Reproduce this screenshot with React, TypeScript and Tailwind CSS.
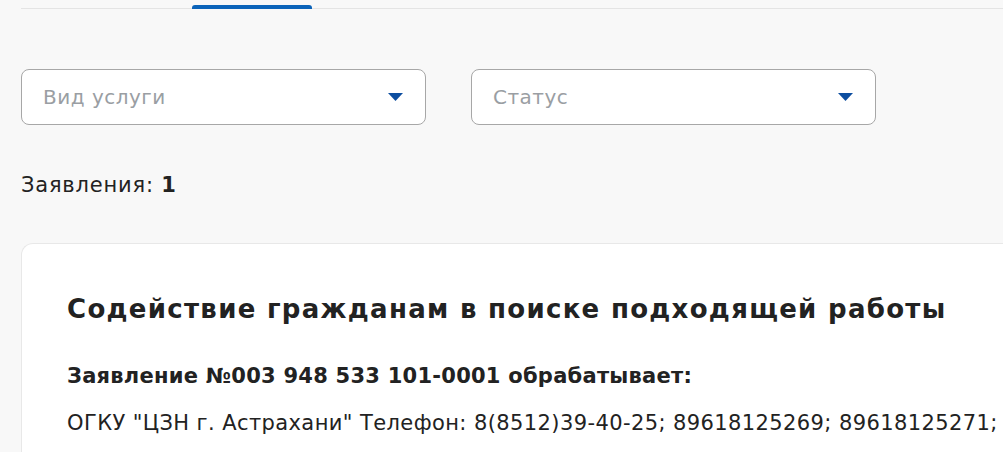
import React from "react";

const FILTERS = ["Вид услуги", "Статус"];

const Caret = () => (
  <svg width="15" height="8" viewBox="0 0 15 8" className="shrink-0">
    <path d="M0 0h15L7.5 8z" fill="#0d4ea0" />
  </svg>
);

export default function App() {
  return (
    <div
      className="flex h-[452px] flex-col overflow-hidden bg-[#f8f8f8] pl-[21px] text-[#222]"
      style={{ fontFamily: "'DejaVu Sans', sans-serif" }}
    >
      {/* tabs line */}
      <div className="flex h-[9px] shrink-0 items-end border-b border-[#e4e4e4]">
        <div className="ml-[171px] h-[4px] w-[120px] translate-y-[1px] rounded-t-[3px] bg-[#0b63b9]" />
      </div>

      {/* filters */}
      <div className="mt-[60px] flex gap-[45px]">
        {FILTERS.map((f) => (
          <div
            key={f}
            className="flex h-[56px] w-[405px] items-center justify-between rounded-[8px] border border-[#a7a7a7] bg-white pl-[21px] pr-[22px]"
          >
            <span className="text-[20px] tracking-[0.5px] text-[#9a9ea3]">{f}</span>
            <Caret />
          </div>
        ))}
      </div>

      <div className="mt-[48px] text-[21px] leading-[24px] tracking-[0.8px]">
        Заявления: <span className="font-bold">1</span>
      </div>

      {/* card, cut off by the bottom of the frame */}
      <div className="mt-[46px] flex-1 rounded-tl-[12px] border-l border-t border-[#e8e8e8] bg-white pl-[45px] pt-[49px] whitespace-nowrap">
        <h2 className="text-[26px] font-semibold leading-[32px] tracking-[1.3px]">
          Содействие гражданам в поиске подходящей работы
        </h2>
        <div className="mt-[39px] text-[21px] font-bold leading-[24px] tracking-[0.25px]">
          Заявление №003 948 533 101-0001 обрабатывает:
        </div>
        <div className="mt-[23px] text-[21px] leading-[24px] tracking-[0.4px]">
          ОГКУ "ЦЗН г. Астрахани" Телефон: 8(8512)39-40-25; 89618125269; 89618125271;
        </div>
      </div>
    </div>
  );
}
